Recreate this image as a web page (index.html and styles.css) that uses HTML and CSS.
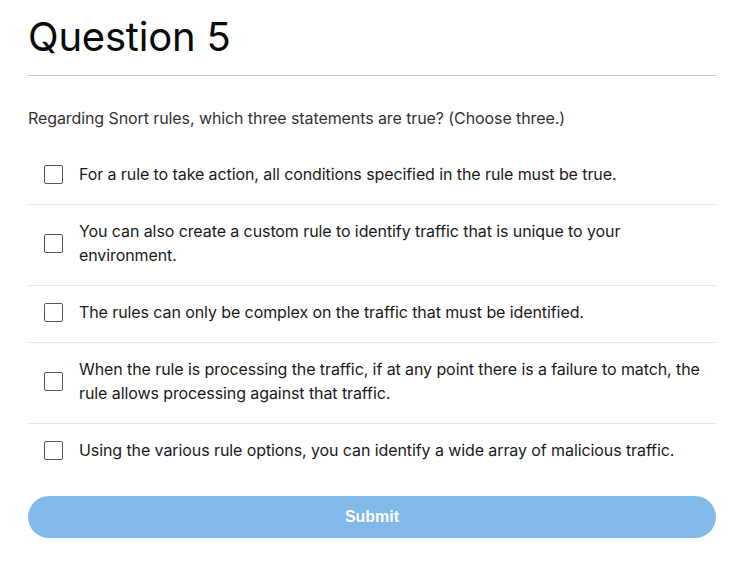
FILE: index.html
```html
<!DOCTYPE html>
<html lang="en">
<head>
    <meta charset="UTF-8">
    <meta name="viewport" content="width=device-width, initial-scale=1.0">
    <title>Question 5</title>
    <link rel="stylesheet" href="styles.css">
</head>
<body>
    <div class="quiz">
        <h1>Question 5</h1>
        <p class="prompt">Regarding Snort rules, which three statements are true? (Choose three.)</p>

        <ul class="options">
            <li><label><input type="checkbox"><span class="box"></span><span>For a rule to take action, all conditions specified in the rule must be true.</span></label></li>
            <li><label><input type="checkbox"><span class="box"></span><span>You can also create a custom rule to identify traffic that is unique to your environment.</span></label></li>
            <li><label><input type="checkbox"><span class="box"></span><span>The rules can only be complex on the traffic that must be identified.</span></label></li>
            <li><label><input type="checkbox"><span class="box"></span><span>When the rule is processing the traffic, if at any point there is a failure to match, the rule allows processing against that traffic.</span></label></li>
            <li><label><input type="checkbox"><span class="box"></span><span>Using the various rule options, you can identify a wide array of malicious traffic.</span></label></li>
        </ul>

        <button class="submit" disabled>Submit</button>
    </div>
</body>
</html>
```

FILE: styles.css
```css
body {
    margin: 0;
    font-family: Inter, "Noto Sans", sans-serif;
    color: #1a1a1a;
    background: #fff;
    letter-spacing: -0.09px;
}
.quiz {
    padding: 13px 23px 0 28px;
}
h1 {
    margin: 0;
    padding-bottom: 14px;
    font-size: 40px;
    font-weight: 400;
    line-height: 48px;
    color: #0a0a0a;
    letter-spacing: -0.2px;
    border-bottom: 1px solid #c8c8c8;
}
.prompt {
    margin: 30px 0 18px;
    font-size: 16px;
    line-height: 24px;
    color: #333;
}
.options {
    list-style: none;
    margin: 0;
    padding: 0;
}
.options li {
    border-bottom: 1px solid #e6e6e6;
}
.options li:last-child {
    border-bottom: none;
}
.options label {
    display: flex;
    align-items: center;
    gap: 16px;
    padding: 14px 0 18px 16px;
    font-size: 16px;
    line-height: 24px;
    cursor: pointer;
}
.options input {
    display: none;
}
.box {
    flex: none;
    width: 17px;
    height: 17px;
    border: 1.5px solid #555;
    border-radius: 2px;
}
.submit {
    display: block;
    width: 100%;
    height: 42px;
    margin-top: 16px;
    border: none;
    border-radius: 21px;
    background: #80b9ea;
    color: #fff;
    font-family: "Liberation Sans", Arial, sans-serif;
    font-size: 16px;
    font-weight: 700;
    letter-spacing: 0;
}
```
